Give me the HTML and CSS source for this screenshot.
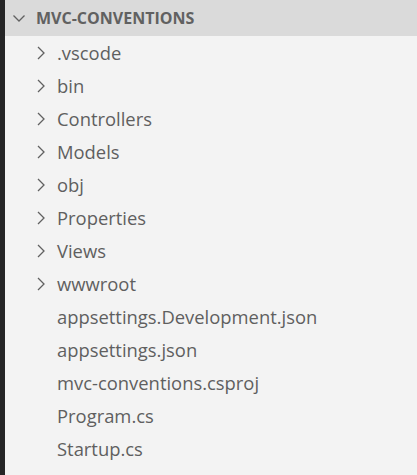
FILE: index.html
```html
<!DOCTYPE html>
<html>
<head>
<meta charset="utf-8">
<link rel="stylesheet" href="styles.css">
</head>
<body>
<div class="app">
  <div class="edge"></div>
  <div class="explorer">
    <div class="header">
      <svg class="chev-down" width="14" height="14" viewBox="0 0 14 14"><path d="M1.5 4.5 L7 10 L12.5 4.5" fill="none" stroke="#616161" stroke-width="1.3"/></svg>
      <span>MVC-CONVENTIONS</span>
    </div>
    <div class="tree">
      <div class="row"><svg class="chev" width="10" height="16" viewBox="0 0 10 16"><path d="M2 2 L8 8 L2 14" fill="none" stroke="#616161" stroke-width="1.3"/></svg><span>.vscode</span></div>
      <div class="row"><svg class="chev" width="10" height="16" viewBox="0 0 10 16"><path d="M2 2 L8 8 L2 14" fill="none" stroke="#616161" stroke-width="1.3"/></svg><span>bin</span></div>
      <div class="row"><svg class="chev" width="10" height="16" viewBox="0 0 10 16"><path d="M2 2 L8 8 L2 14" fill="none" stroke="#616161" stroke-width="1.3"/></svg><span>Controllers</span></div>
      <div class="row"><svg class="chev" width="10" height="16" viewBox="0 0 10 16"><path d="M2 2 L8 8 L2 14" fill="none" stroke="#616161" stroke-width="1.3"/></svg><span>Models</span></div>
      <div class="row"><svg class="chev" width="10" height="16" viewBox="0 0 10 16"><path d="M2 2 L8 8 L2 14" fill="none" stroke="#616161" stroke-width="1.3"/></svg><span>obj</span></div>
      <div class="row"><svg class="chev" width="10" height="16" viewBox="0 0 10 16"><path d="M2 2 L8 8 L2 14" fill="none" stroke="#616161" stroke-width="1.3"/></svg><span>Properties</span></div>
      <div class="row"><svg class="chev" width="10" height="16" viewBox="0 0 10 16"><path d="M2 2 L8 8 L2 14" fill="none" stroke="#616161" stroke-width="1.3"/></svg><span>Views</span></div>
      <div class="row"><svg class="chev" width="10" height="16" viewBox="0 0 10 16"><path d="M2 2 L8 8 L2 14" fill="none" stroke="#616161" stroke-width="1.3"/></svg><span>wwwroot</span></div>
      <div class="row file"><span>appsettings.Development.json</span></div>
      <div class="row file"><span>appsettings.json</span></div>
      <div class="row file"><span>mvc-conventions.csproj</span></div>
      <div class="row file"><span>Program.cs</span></div>
      <div class="row file"><span>Startup.cs</span></div>
    </div>
  </div>
</div>
</body>
</html>
```

FILE: styles.css
```css
html, body {
  margin: 0;
  padding: 0;
  height: 100%;
  background: #f3f3f3;
}
.app {
  display: flex;
  height: 475px;
  font-family: "Open Sans", "Noto Sans", sans-serif;
  color: #5f5f5f;
}
.edge {
  width: 5px;
  background: #252526;
  flex: none;
}
.explorer {
  flex: 1;
  background: #f3f3f3;
  display: flex;
  flex-direction: column;
}
.header {
  height: 36px;
  background: #dadada;
  display: flex;
  align-items: center;
  padding-left: 7px;
  gap: 10px;
  font-weight: 700;
  font-size: 16px;
  color: #616161;
}
.chev-down {
  flex: none;
}
.tree {
  display: flex;
  flex-direction: column;
}
.row {
  height: 33px;
  display: flex;
  align-items: center;
  padding-left: 31px;
  gap: 11px;
  font-size: 18.4px;
  white-space: nowrap;
}
.chev {
  flex: none;
}
.row.file {
  padding-left: 52px;
}
```
